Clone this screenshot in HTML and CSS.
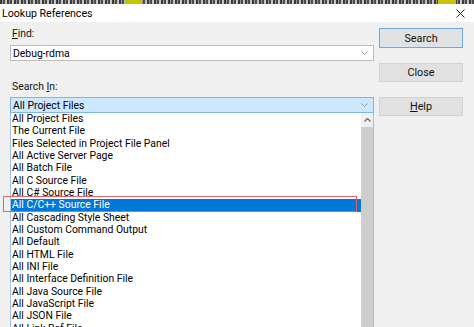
FILE: index.html
```html
<!DOCTYPE html>
<html lang="en">
<head>
  <meta charset="UTF-8" />
  <title>Lookup References</title>
  <link rel="stylesheet" href="styles.css">
</head>
<body>
  <div class="editor-strip"></div>

  <header class="titlebar">
    <span class="title">Lookup References</span>
    <svg class="close-x" width="9" height="9" viewBox="0 0 9 9"><path d="M0.5 0.5L8.5 8.5M8.5 0.5L0.5 8.5" stroke="#222" stroke-width="1"/></svg>
  </header>

  <main class="dialog">
    <section class="fields">
      <label class="label find-label"><u>F</u>ind:</label>
      <div class="combo">
        <span>Debug-rdma</span>
        <svg class="chev" width="7" height="4" viewBox="0 0 7 4"><path d="M0.5 0.5L3.5 3.5L6.5 0.5" fill="none" stroke="#999" stroke-width="1"/></svg>
      </div>

      <label class="label search-label">Search <u>I</u>n:</label>
      <div class="combo select">
        <span>All Project Files</span>
        <svg class="chev" width="7" height="4" viewBox="0 0 7 4"><path d="M0.5 0.5L3.5 3.5L6.5 0.5" fill="none" stroke="#999" stroke-width="1"/></svg>
      </div>

      <div class="listbox">
        <ul class="items">
          <li>All Project Files</li>
          <li>The Current File</li>
          <li>Files Selected in Project File Panel</li>
          <li>All Active Server Page</li>
          <li>All Batch File</li>
          <li>All C Source File</li>
          <li>All C# Source File</li>
          <li class="selected">All C/C++ Source File</li>
          <li>All Cascading Style Sheet</li>
          <li>All Custom Command Output</li>
          <li>All Default</li>
          <li>All HTML File</li>
          <li>All INI File</li>
          <li>All Interface Definition File</li>
          <li>All Java Source File</li>
          <li>All JavaScript File</li>
          <li>All JSON File</li>
          <li>All Link Ref File</li>
        </ul>
        <div class="scrollbar">
          <div class="arrow">
            <svg width="7" height="4" viewBox="0 0 7 4"><path d="M0.5 3.5L3.5 0.5L6.5 3.5" fill="none" stroke="#666" stroke-width="1.2"/></svg>
          </div>
          <div class="thumb"></div>
        </div>
      </div>
    </section>

    <aside class="buttons">
      <button class="btn default">Search</button>
      <button class="btn close">Close</button>
      <button class="btn help"><u>H</u>elp</button>
    </aside>

    <!-- annotation box drawn over the list -->
    <div class="mark"></div>
  </main>
</body>
</html>
```

FILE: styles.css
```css
body {
  margin: 0;
  width: 474px;
  height: 327px;
  overflow: hidden;
  background: #f0f0f0;
  font-family: Roboto, "Noto Sans", sans-serif;
  font-size: 10.4px;
  color: #000;
}
/* bottom edge of the editor text behind the dialog */
.editor-strip {
  height: 4px;
  background:
    linear-gradient(90deg, transparent 125px, #c9c200 125px, #c9c200 142px, transparent 142px, transparent 438px, #c9c200 438px, #c9c200 456px, transparent 456px),
    repeating-linear-gradient(90deg, #3a3a3a 0 2px, #9a9a9a 2px 3px, #4a4a4a 3px 5px, #c4c4c4 5px 7px),
    #bdbdbd;
}
.titlebar {
  height: 18px;
  background: #fff;
  display: flex;
  align-items: center;
  justify-content: space-between;
  padding: 0 9px 0 2px;
}
.title {
  font-size: 10.6px;
}
.close-x {
  margin-top: 1px;
}
.dialog {
  position: relative;
  display: flex;
  padding-left: 10px;
}
.fields {
  width: 364px;
  display: flex;
  flex-direction: column;
}
.label {
  display: block;
  padding-left: 2px;
  line-height: 12px;
  color: #111;
}
.find-label {
  margin-top: 6px;
}
.search-label {
  margin-top: 20px;
}
.combo {
  margin-top: 5px;
  height: 14px;
  border: 1px solid #bcbcbc;
  background: #fff;
  display: flex;
  align-items: center;
  justify-content: space-between;
  padding: 0 5px 0 2px;
}
.select {
  margin-top: 4px;
  background: #cce8ff;
  border-color: #7eb4ea;
}
.chev {
  display: block;
}
.listbox {
  height: 220px;
  display: flex;
  background: #fff;
  border-left: 1px solid #9fc3e7;
  border-right: 1px solid #9fc3e7;
}
.items {
  flex: 1;
  list-style: none;
  margin: 0;
  padding: 0;
}
.items li {
  height: 12.33px;
  line-height: 12.33px;
  padding-left: 1px;
  white-space: nowrap;
}
.items li.selected {
  background: #0078d7;
  color: #fff;
}
.scrollbar {
  width: 12px;
  display: flex;
  flex-direction: column;
}
.arrow {
  height: 14px;
  background: #f0f0f0;
  display: flex;
  justify-content: center;
  padding-top: 5px;
  box-sizing: border-box;
}
.arrow svg {
  display: block;
}
.thumb {
  flex: 1;
  background: #cdcdcd;
}
.buttons {
  margin-left: 5px;
  width: 84px;
  display: flex;
  flex-direction: column;
}
.btn {
  font-family: inherit;
  font-size: 10.8px;
  color: #111;
  background: #e1e1e1;
  border: 1px solid #d2d2d2;
  padding: 0;
  margin: 0;
}
.btn.default {
  margin-top: 6px;
  height: 20px;
  border-color: #6fa6dc;
  box-shadow: inset 0 0 0 1px #d6e6f5;
}
.btn.close {
  margin-top: 15px;
  height: 19px;
}
.btn.help {
  margin-top: 15px;
  height: 19px;
}
.mark {
  position: absolute;
  left: 3px;
  top: 174px;
  width: 352px;
  height: 14px;
  border: 1.5px solid #e0646c;
}
```
